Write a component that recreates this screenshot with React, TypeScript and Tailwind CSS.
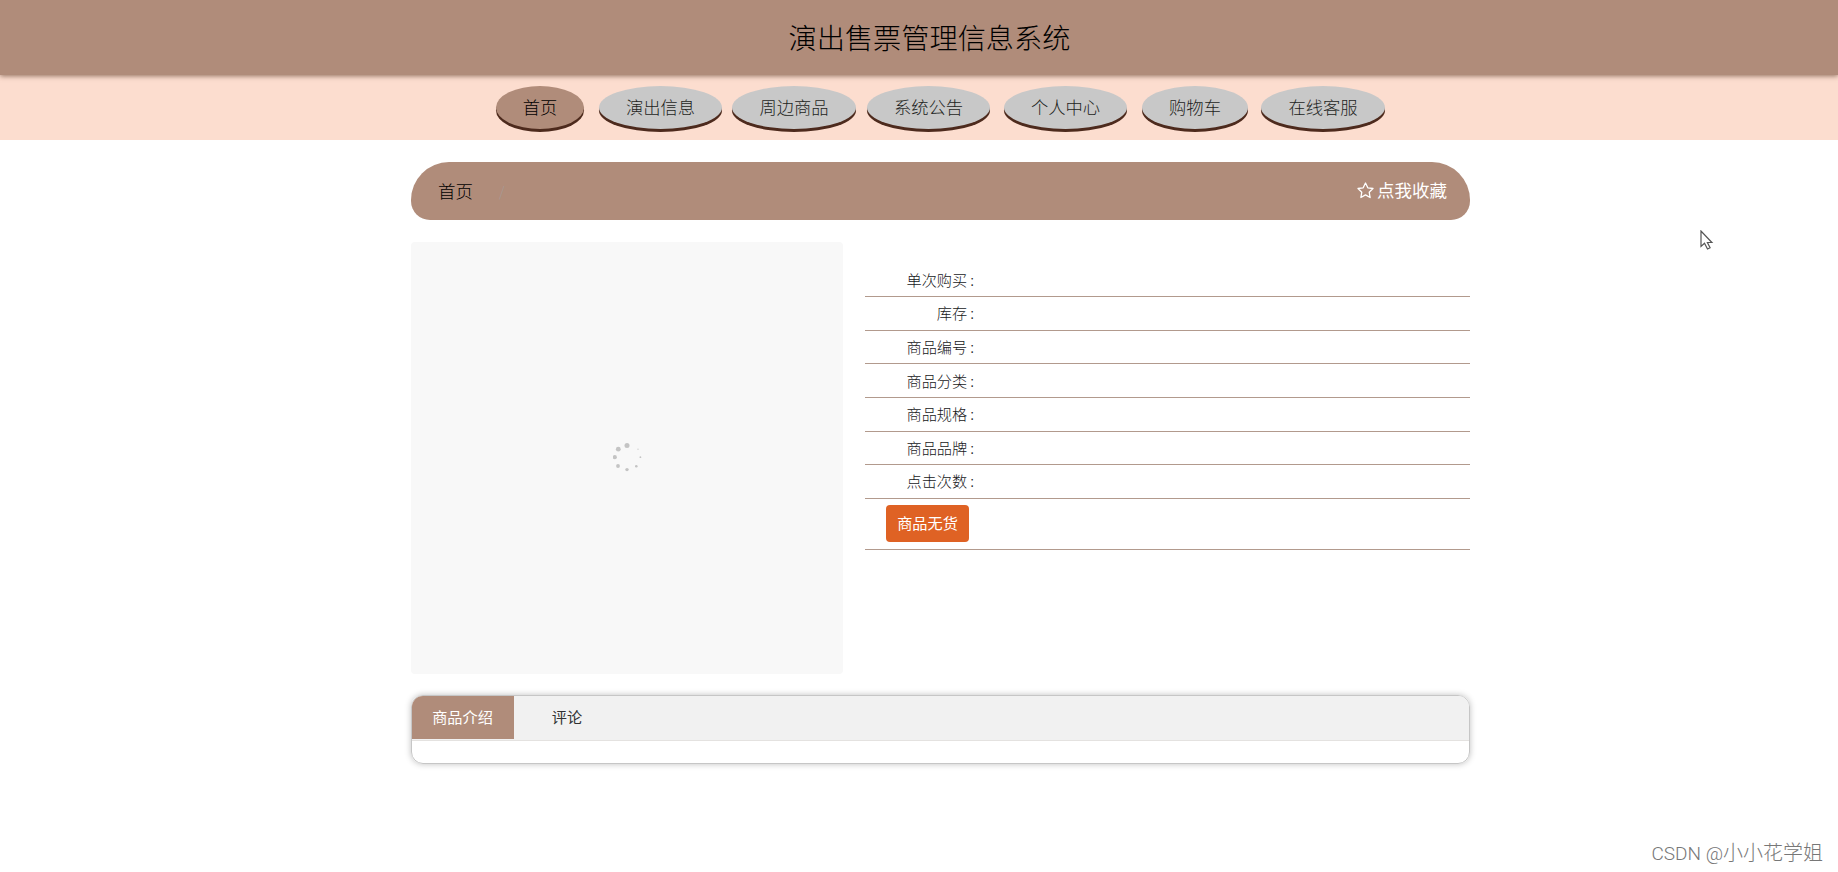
import type { ReactNode } from "react";

const navItems = [
  { label: "首页", box: "w-[88px] bg-[#b08c7a] text-black" },
  { label: "演出信息", box: "ml-[15px] w-[123px] bg-[#c8c8c8] text-[#1d1f22]" },
  { label: "周边商品", box: "ml-[10px] w-[124px] bg-[#c8c8c8] text-[#1d1f22]" },
  { label: "系统公告", box: "ml-[11px] w-[123px] bg-[#c8c8c8] text-[#1d1f22]" },
  { label: "个人中心", box: "ml-[14px] w-[123px] bg-[#c8c8c8] text-[#1d1f22]" },
  { label: "购物车", box: "ml-[15px] w-[106px] bg-[#c8c8c8] text-[#1d1f22]" },
  { label: "在线客服", box: "ml-[13px] w-[124px] bg-[#c8c8c8] text-[#1d1f22]" },
];

const fields = ["单次购买", "库存", "商品编号", "商品分类", "商品规格", "商品品牌", "点击次数"];

const dots = [
  [14, 2.6, 2.5],
  [5.3, 6.2, 2.4],
  [1.8, 14.2, 2.1],
  [5, 23, 1.9],
  [14, 26.6, 1.7],
  [23.3, 23.2, 1.3],
  [27.4, 14.2, 0.9],
  [25, 6.2, 0.6],
];

function Row({ children }: { children: ReactNode }) {
  return (
    <div className="flex h-[33.6px] items-center border-b border-[#b29a8d] pb-px text-[15.2px] leading-none text-[#17181a]">
      {children}
    </div>
  );
}

function Spinner() {
  return (
    <svg className="ml-0.5" width="30" height="30" viewBox="0 0 30 30" fill="#c4c4c4">
      {dots.map(([x, y, r]) => (
        <circle key={`${x}-${y}`} cx={x} cy={y} r={r} />
      ))}
    </svg>
  );
}

export default function App() {
  return (
    <div className="relative h-[872px] w-full overflow-hidden bg-white font-['Noto_Sans_CJK_SC',sans-serif] font-light">
      <header className="relative flex h-[75px] items-center justify-center bg-[#b08c7a] pb-px pl-[21px] shadow-[0_1px_5px_rgba(70,40,20,0.6)]">
        <h1 className="text-[28.2px] leading-none text-black">演出售票管理信息系统</h1>
      </header>

      <nav className="flex h-[65px] justify-center bg-[#fcddcf] pt-[11px] pl-[43px]">
        {navItems.map((n) => (
          <a
            key={n.label}
            className={`flex h-[43px] items-center justify-center rounded-[50%] pb-0.5 text-[17.3px] leading-none shadow-[0_3px_0_#4d2a1d] ${n.box}`}
          >
            {n.label}
          </a>
        ))}
      </nav>

      <main className="ml-[411px] w-[1059px]">
        <div className="mt-[22px] flex h-[58px] items-center justify-between rounded-t-[38px] rounded-b-[19px] bg-[#b08c7a] pr-[23px] pl-[27px] text-[17.5px] leading-none">
          <div className="flex items-center text-black">
            <span>首页</span>
            <span className="ml-[26px] text-[14px] text-[#a69a96]">/</span>
          </div>
          <div className="flex items-center gap-[3px] pb-0.5 text-white">
            <svg width="17" height="17" viewBox="0 0 17 17" fill="none" stroke="currentColor" strokeWidth="1.3" strokeLinejoin="round">
              <path d="M8.5 1l2.300 4.800 5.200.7-3.800 3.700.9 5.300-4.600-2.600-4.600 2.600.9-5.300L1 6.500l5.200-.7z" />
            </svg>
            <span className="font-normal">点我收藏</span>
          </div>
        </div>

        <div className="mt-[22px] flex gap-[22px]">
          <div className="flex h-[432px] w-[432px] items-center justify-center rounded bg-[#f8f8f8]">
            <Spinner />
          </div>
          <div className="flex-1 pt-[21.700px]">
            {fields.map((f) => (
              <Row key={f}>
                <span className="flex w-[109px] items-center justify-end">
                  {f}
                  <span className="ml-[3px]">:</span>
                </span>
              </Row>
            ))}
            <div className="flex h-[51px] items-center border-b border-[#b29a8d] pb-px pl-[21px]">
              <button className="h-[37px] w-[83px] rounded bg-[#df6224] pb-0.5 text-[15.2px] leading-none font-normal text-white">
                商品无货
              </button>
            </div>
          </div>
        </div>

        <div className="mt-[21px] h-[69px] overflow-hidden rounded-xl border border-[#c6c6c6] shadow-[0_0_6px_rgba(0,0,0,0.25)]">
          <div className="flex h-[45px] border-b border-[#e4e2e0] bg-[#f1f1f1] text-[15.2px] leading-none">
            <div className="flex h-[43px] w-[102px] items-center justify-center bg-[#b08c7a] pr-px pb-[2px] font-normal text-white">
              商品介绍
            </div>
            <div className="flex h-[43px] w-[106px] items-center justify-center pb-[2px] font-normal text-[#303133]">评论</div>
          </div>
        </div>
      </main>

      <svg className="absolute top-[230px] left-[1700px]" width="14" height="21" viewBox="0 0 14 21" fill="#fff" stroke="#555" strokeWidth="1.2">
        <path d="M1 1v15.500l3.500-3.200 3 5.700 2.600-1.300-2.700-5.200h4.500z" />
      </svg>

      <div className="absolute top-[842px] right-[15px] text-[20px] leading-none whitespace-nowrap text-[#777]">
        <span className="font-[Roboto,sans-serif] text-[19px]">CSDN @</span>小小花学姐
      </div>
    </div>
  );
}
